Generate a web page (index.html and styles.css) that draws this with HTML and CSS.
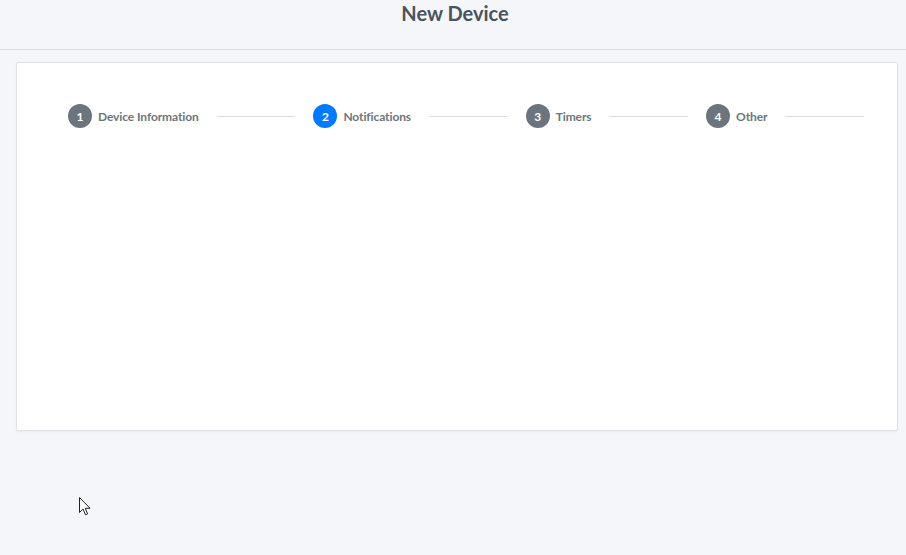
FILE: index.html
```html
<!DOCTYPE html>
<html lang="en">
<head>
<meta charset="utf-8">
<title>New Device</title>
<link rel="stylesheet" href="styles.css">
</head>
<body>
<header class="page-header">
  <h1 class="page-title">New Device</h1>
</header>
<main class="content">
  <section class="card">
    <div class="stepper">
      <div class="step">
        <span class="step-circle">1</span>
        <span class="step-label">Device Information</span>
      </div>
      <div class="step-line"></div>
      <div class="step">
        <span class="step-circle active">2</span>
        <span class="step-label">Notifications</span>
      </div>
      <div class="step-line"></div>
      <div class="step">
        <span class="step-circle">3</span>
        <span class="step-label">Timers</span>
      </div>
      <div class="step-line"></div>
      <div class="step">
        <span class="step-circle">4</span>
        <span class="step-label">Other</span>
      </div>
      <div class="step-line"></div>
    </div>
  </section>
</main>
<svg class="cursor" width="12" height="19" viewBox="0 0 12 19" aria-hidden="true">
  <path d="M0.5 0.5 L0.5 15.5 L4 12 L6.5 17.8 L8.6 16.9 L6.2 11.3 L11 11.3 Z" fill="#fff" stroke="#222" stroke-width="1" stroke-linejoin="miter"/>
</svg>
</body>
</html>
```

FILE: styles.css
```css
html, body {
  margin: 0;
  padding: 0;
}
body {
  background: #f5f6fa;
  font-family: Lato, "Open Sans", "Liberation Sans", sans-serif;
  width: 906px;
  height: 555px;
  overflow: hidden;
  position: relative;
}
.page-header {
  height: 49px;
  border-bottom: 1px solid #dcdee3;
  box-sizing: content-box;
  text-align: center;
}
.page-title {
  margin: 0;
  padding-top: 2px;
  padding-left: 4px;
  font-size: 20px;
  line-height: 22px;
  font-weight: 700;
  color: #4b535c;
}
.content {
  padding: 12px 8px 0 16px;
}
.card {
  background: #fff;
  border: 1px solid #dfe1e6;
  border-radius: 2px;
  height: 367px;
  box-shadow: 0 1px 2px rgba(0,0,0,0.04);
}
.stepper {
  display: flex;
  align-items: center;
  padding: 41px 33px 0 33px;
}
.step {
  display: flex;
  align-items: center;
  padding: 0 18px;
}
.step-circle {
  width: 24px;
  height: 24px;
  border-radius: 50%;
  background: #6c757d;
  color: #fff;
  font-size: 12px;
  font-weight: 700;
  display: flex;
  align-items: center;
  justify-content: center;
}
.step-circle.active {
  background: #007bff;
}
.step-label {
  margin-left: 6px;
  font-size: 12px;
  letter-spacing: -0.1px;
  font-weight: 700;
  color: #6c757d;
}
.step-line {
  flex: 1 1 0;
  height: 1px;
  background: #dcdee2;
}
.cursor {
  position: absolute;
  left: 79px;
  top: 497px;
}
```
